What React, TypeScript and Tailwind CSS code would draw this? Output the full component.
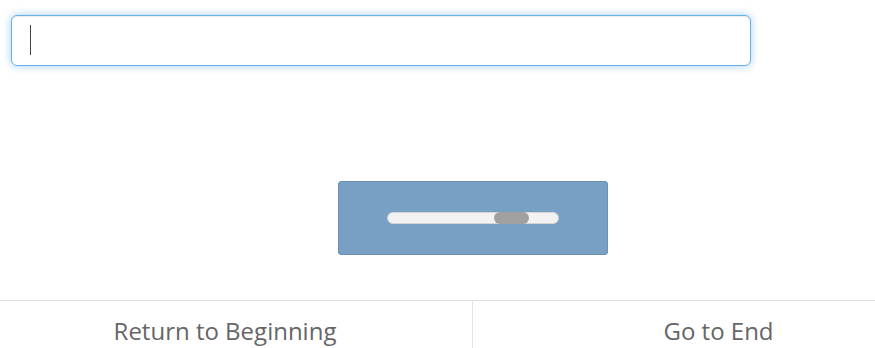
import React, { useState } from 'react';

export default function App() {
  const [value, setValue] = useState('');
  const thumbLeft = 106;

  return (
    <div
      className="relative flex h-[348px] w-[875px] flex-col overflow-hidden bg-white"
      style={{ fontFamily: '"Open Sans", "Liberation Sans", sans-serif' }}
    >
      {/* Answer input */}
      <div className="relative ml-[11px] mt-[15px] w-[740px]">
        <input
          type="text"
          value={value}
          onChange={(e) => setValue(e.target.value)}
          className="h-[51px] w-full rounded-[6px] border border-[#66afe9] bg-white px-[18px] text-[20px] text-[#555] caret-transparent shadow-[inset_0_1px_1px_rgba(0,0,0,0.075),0_0_8px_rgba(102,175,233,0.6)] outline-none"
        />
        {/* caret */}
        {value === '' && (
          <span className="pointer-events-none absolute left-[19px] top-[10px] h-[30px] w-px bg-[#444]" />
        )}
      </div>

      {/* Slider panel */}
      <div className="ml-[338px] mt-[115px] flex h-[74px] w-[270px] items-center justify-center rounded-[3px] border border-[#6c8fb3] bg-[#789fc4]">
        <div className="relative h-[12px] w-[172px] rounded-full border border-[#d4d4d4] bg-[#f2f2f2]">
          <div
            className="absolute top-[-1px] h-[12px] w-[35px] rounded-full bg-[#a0a0a0]"
            style={{ left: thumbLeft }}
          />
        </div>
      </div>

      {/* Footer nav */}
      <div className="mt-[45px] flex h-[48px] border-t border-[#dddddd]">
        <button className="flex w-[473px] items-center justify-center border-r border-[#e5e5e5] pr-[22px] pt-[12px] text-[24px] text-[#666]">
          Return to Beginning
        </button>
        <button className="flex flex-1 items-center justify-center pl-[89px] pt-[12px] text-[24px] text-[#666]">
          Go to End
        </button>
      </div>
    </div>
  );
}
